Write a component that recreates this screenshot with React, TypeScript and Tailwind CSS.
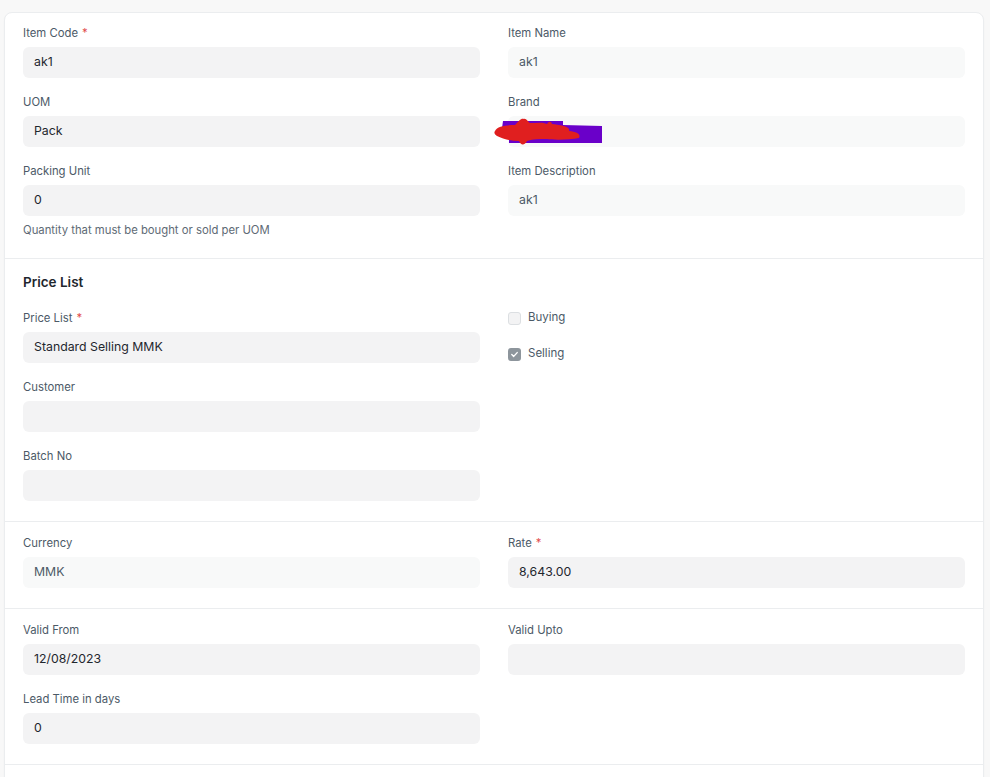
import React from 'react';

const font = { fontFamily: 'Inter, "Noto Sans", sans-serif' };

function Label({ text, required }: { text: string; required?: boolean }) {
  return (
    <div className="h-4 pt-px text-[11.3px] leading-[15px] text-[#4c5a67]">
      {text}
      {required && <span className="ml-1 text-[#e24c4c]">*</span>}
    </div>
  );
}

function Field({
  label,
  value,
  required,
  readOnly,
  description,
  children,
}: {
  label: string;
  value?: string;
  required?: boolean;
  readOnly?: boolean;
  description?: string;
  children?: React.ReactNode;
}) {
  return (
    <div className="mb-4">
      <Label text={label} required={required} />
      <div
        className={`relative mt-[6px] flex h-[31px] items-center rounded-md px-[11px] text-[12.3px] ${
          readOnly ? 'bg-[#f8f9f9] text-[#4c5a67]' : 'bg-[#f3f3f4] text-[#1f272e]'
        }`}
      >
        {value}
        {children}
      </div>
      {description && (
        <div className="mt-[6px] text-[11.3px] leading-4 text-[#5e6a75]">{description}</div>
      )}
    </div>
  );
}

function Check({ label, checked }: { label: string; checked?: boolean }) {
  return (
    <div className="flex h-4 items-center gap-[7px]">
      {checked ? (
        <span className="flex h-[13px] w-[13px] items-center justify-center rounded-[3px] bg-[#8d959c]">
          <svg width="9" height="9" viewBox="0 0 9 9" fill="none">
            <path d="M1.8 4.6 3.7 6.4 7.2 2.6" stroke="white" strokeWidth="1.4" strokeLinecap="round" strokeLinejoin="round" />
          </svg>
        </span>
      ) : (
        <span className="h-[13px] w-[13px] rounded-[3px] border border-[#dcdfe2] bg-[#f3f3f4]" />
      )}
      <span className="text-[11.5px] text-[#4c5a67]">{label}</span>
    </div>
  );
}

// redaction scribble drawn over the Brand value
function Scribble() {
  return (
    <svg className="absolute left-[-15px] top-0" width="112" height="30" viewBox="0 0 112 30">
      <path d="M10 5 L70 5 L70 9 L109 10 L109 27 L16 27 L16 21 L8 19 Z" fill="#6a00c9" />
      <path
        d="M2 15 C4 10 14 9 22 9 C26 5 28 2 31 3 C33 2 35 6 37 7 C44 7 50 6 54 8 C56 5 58 5 59 8 C66 9 78 10 76 15 C84 16 88 18 86 22 C76 24 60 24 54 23 C46 23 40 23 34 25 C32 29 28 30 26 25 C18 25 10 23 4 20 C1 18 1 16 2 15 Z"
        fill="#e01f1f"
      />
    </svg>
  );
}

export default function App() {
  return (
    <div className="min-h-[777px] bg-[#f8f8f8] pl-1 pr-[6px] pt-3" style={font}>
      <div className="overflow-hidden rounded-t-lg border border-[#ebedef] bg-white shadow-[0_1px_2px_rgba(0,0,0,0.03)]">
        {/* Item */}
        <div className="grid grid-cols-2 gap-x-[28px] px-[18px] pb-1 pt-3">
          <div>
            <Field label="Item Code" value="ak1" required />
            <Field label="UOM" value="Pack" />
            <Field label="Packing Unit" value="0" description="Quantity that must be bought or sold per UOM" />
          </div>
          <div>
            <Field label="Item Name" value="ak1" readOnly />
            <Field label="Brand" readOnly>
              <Scribble />
            </Field>
            <Field label="Item Description" value="ak1" readOnly />
          </div>
        </div>

        {/* Price List */}
        <div className="border-t border-[#ebedef] px-[18px] pb-1 pt-[13px]">
          <div className="mb-[18px] text-[13.5px] font-semibold leading-5 text-[#1f272e]">Price List</div>
          <div className="grid grid-cols-2 gap-x-[28px]">
            <div>
              <Field label="Price List" value="Standard Selling MMK" required />
              <Field label="Customer" />
              <Field label="Batch No" />
            </div>
            <div className="flex flex-col gap-5">
              <Check label="Buying" />
              <Check label="Selling" checked />
            </div>
          </div>
        </div>

        {/* Rate */}
        <div className="grid grid-cols-2 gap-x-[28px] border-t border-[#ebedef] px-[18px] pb-1 pt-[13px]">
          <Field label="Currency" value="MMK" readOnly />
          <Field label="Rate" value="8,643.00" required />
        </div>

        {/* Validity */}
        <div className="grid grid-cols-2 gap-x-[28px] border-t border-[#ebedef] px-[18px] pb-1 pt-[13px]">
          <div>
            <Field label="Valid From" value="12/08/2023" />
            <Field label="Lead Time in days" value="0" />
          </div>
          <div>
            <Field label="Valid Upto" />
          </div>
        </div>

        <div className="h-10 border-t border-[#ebedef]" />
      </div>
    </div>
  );
}
